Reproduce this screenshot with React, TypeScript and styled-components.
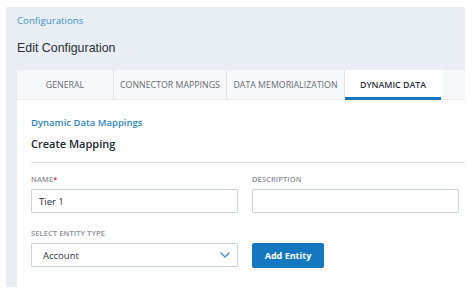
import React from "react";
import styled, { createGlobalStyle } from "styled-components";

const Global = createGlobalStyle`
  html, body { margin: 0; padding: 0; background: #ffffff; }
  body { font-family: "Open Sans", "Noto Sans", sans-serif; -webkit-font-smoothing: antialiased; }
  * { box-sizing: border-box; }
`;

const Panel = styled.div`
  margin: 7px 0 0 6px;
  width: 459px;
  height: 280px;
  background: #e8eef4;
  padding: 7px 0 0 11px;
  display: flex;
  flex-direction: column;
`;

const Crumb = styled.a`
  font-size: 9.7px;
  line-height: 14px;
  color: #4390c6;
  text-decoration: none;
  align-self: flex-start;
`;

const Title = styled.h1`
  margin: 12px 0 0;
  font-family: "Liberation Sans", Arial, sans-serif;
  font-weight: 400;
  font-size: 12.4px;
  line-height: 16px;
  color: #2b2f33;
`;

const Tabs = styled.div`
  margin-top: 14px;
  height: 30px;
  display: flex;
  background: #f6f8fa;
  border-bottom: 1px solid #e6eaee;
`;

const Tab = styled.div<{ $w: number; $active?: boolean }>`
  width: ${(p) => p.$w}px;
  display: flex;
  align-items: center;
  justify-content: center;
  font-size: 8.8px;
  white-space: nowrap;
  color: ${(p) => (p.$active ? "#2d3236" : "#666d73")};
  font-weight: ${(p) => (p.$active ? 600 : 400)};
  background: ${(p) => (p.$active ? "#ffffff" : "transparent")};
  border-right: 1px solid ${(p) => (p.$active ? "transparent" : "#e3e7eb")};
  box-shadow: ${(p) => (p.$active ? "inset 0 -3px 0 #1b74b9" : "none")};
  margin-bottom: ${(p) => (p.$active ? "-1px" : "0")};
  padding-bottom: ${(p) => (p.$active ? "1px" : "0")};
`;

const Card = styled.div`
  flex: 1;
  background: #ffffff;
  padding: 16px 0 0 14px;
  display: flex;
  flex-direction: column;
`;

const SubLink = styled.div`
  font-size: 9.5px;
  line-height: 13px;
  font-weight: 600;
  color: #2f86c2;
`;

const Heading = styled.h2`
  margin: 7px 0 0;
  font-size: 11px;
  line-height: 15px;
  font-weight: 600;
  color: #24282c;
`;

const Divider = styled.hr`
  margin: 11px 0 0;
  border: 0;
  border-top: 1px solid #dfe3e7;
  width: 434px;
`;

const FormGrid = styled.div`
  margin-top: 11px;
  display: grid;
  grid-template-columns: 207px 207px;
  column-gap: 14px;
  row-gap: 15px;
  align-items: end;
`;

const Field = styled.div`
  display: flex;
  flex-direction: column;
`;

const Label = styled.label`
  font-size: 7.5px;
  line-height: 11px;
  font-weight: 600;
  color: #8b9198;
  letter-spacing: 0.1px;
  margin-bottom: 4px;
  white-space: nowrap;
`;

const Req = styled.span`
  color: #d9302c;
`;

const Input = styled.div`
  height: 24px;
  border: 1px solid #cfd4d9;
  border-radius: 1px;
  padding: 0 7px;
  display: flex;
  align-items: center;
  font-size: 9.5px;
  color: #2e3338;
`;

const Select = styled(Input)`
  justify-content: space-between;
  padding: 0 7px 0 11px;
`;

const Button = styled.button`
  width: 72px;
  height: 25px;
  border: 0;
  border-radius: 2px;
  background: #1677c1;
  color: #ffffff;
  font-family: "Open Sans", sans-serif;
  font-weight: 700;
  font-size: 9px;
  padding: 0;
  cursor: pointer;
  margin-bottom: -1px;
`;

const Chevron = () => (
  <svg width="10" height="6" viewBox="0 0 10 6" fill="none">
    <path d="M1 1l4 4 4-4" stroke="#3b88c8" strokeWidth="1.2" strokeLinecap="round" strokeLinejoin="round" />
  </svg>
);

const tabs = [
  { label: "GENERAL", w: 97 },
  { label: "CONNECTOR MAPPINGS", w: 113 },
  { label: "DATA MEMORIALIZATION", w: 118 },
  { label: "DYNAMIC DATA", w: 97, active: true },
];

export default function App() {
  return (
    <>
      <Global />
      <Panel>
        <Crumb href="#">Configurations</Crumb>
        <Title>Edit Configuration</Title>
        <Tabs>
          {tabs.map((t) => (
            <Tab key={t.label} $w={t.w} $active={t.active}>
              {t.label}
            </Tab>
          ))}
        </Tabs>
        <Card>
          <SubLink>Dynamic Data Mappings</SubLink>
          <Heading>Create Mapping</Heading>
          <Divider />
          <FormGrid>
            <Field>
              <Label>
                NAME<Req>*</Req>
              </Label>
              <Input>Tier 1</Input>
            </Field>
            <Field>
              <Label>DESCRIPTION</Label>
              <Input />
            </Field>
            <Field>
              <Label>SELECT ENTITY TYPE</Label>
              <Select>
                <span>Account</span>
                <Chevron />
              </Select>
            </Field>
            <Field>
              <Button>Add Entity</Button>
            </Field>
          </FormGrid>
        </Card>
      </Panel>
    </>
  );
}
